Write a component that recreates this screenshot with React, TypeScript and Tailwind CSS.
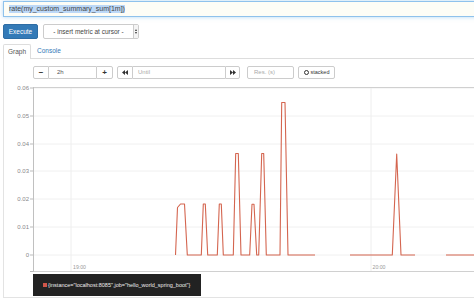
import React from 'react'

const font = { fontFamily: '"Liberation Sans", Arial, sans-serif' }

const yTicks = [
  { y: 88, label: '0.06' },
  { y: 116, label: '0.05' },
  { y: 144, label: '0.04' },
  { y: 171, label: '0.03' },
  { y: 199, label: '0.02' },
  { y: 227, label: '0.01' },
  { y: 255, label: '0' },
]

const series = [
  'M175.5,255 L177.5,207.5 L180.5,204 L184.5,204 L187.3,255 L201.3,255 L203.3,204 L205.3,204 L207.7,255 L217.3,255 L219.3,204 L221.3,204 L223.3,255 L233.3,255 L235.7,153.5 L238.3,153.5 L241,255 L249.7,255 L252,204.3 L254,204.3 L256.7,255 L258.7,255 L261.7,153.5 L263.7,153.5 L266.3,255 L280,255 L281.7,102.5 L285,102.5 L288,255 L315,255',
  'M350,255 L392.3,255 L396.7,154 L401,255 L415,255',
  'M446,255 L480,255',
]

function Backward(): React.JSX.Element {
  return (
    <svg width="6" height="5" viewBox="0 0 6 5">
      <path d="M3 0 L0 2.5 L3 5 Z M6 0 L3 2.5 L6 5 Z" fill="#333" />
    </svg>
  )
}

function Forward(): React.JSX.Element {
  return (
    <svg width="6" height="5" viewBox="0 0 6 5">
      <path d="M0 0 L3 2.5 L0 5 Z M3 0 L6 2.5 L3 5 Z" fill="#333" />
    </svg>
  )
}

function Chart(): React.JSX.Element {
  return (
    <svg width="470" height="195" viewBox="4 79 470 195" className="block" style={font}>
      {yTicks.map((t) => (
        <g key={t.label}>
          <line x1="33" x2="474" y1={t.y} y2={t.y} stroke="#f0f0f0" strokeWidth="1" />
          <line x1="30" x2="33" y1={t.y} y2={t.y} stroke="#aaa" strokeWidth="0.8" />
          <text x="29" y={t.y + 2} fontSize="6" fill="#888" textAnchor="end">
            {t.label}
          </text>
        </g>
      ))}
      <line x1="71" x2="71" y1="87" y2="271" stroke="#eeeeee" strokeWidth="1" />
      <line x1="371" x2="371" y1="87" y2="271" stroke="#eeeeee" strokeWidth="1" />
      <text x="73" y="269" fontSize="5.2" fill="#999">19:00</text>
      <text x="372.5" y="269" fontSize="5.2" fill="#999">20:00</text>
      <line x1="33" x2="474" y1="87.5" y2="87.5" stroke="#d0d0d0" strokeWidth="1" />
      <line x1="33" x2="474" y1="271.5" y2="271.5" stroke="#d0d0d0" strokeWidth="1" />
      <line x1="33.5" x2="33.5" y1="87" y2="272" stroke="#c0c0c0" strokeWidth="1" />
      <line x1="30" x2="33" y1="271.5" y2="271.5" stroke="#aaa" strokeWidth="0.8" />
      {series.map((d, i) => (
        <path key={i} d={d} fill="none" stroke="#d4654f" strokeWidth="1.1" strokeLinejoin="round" />
      ))}
    </svg>
  )
}

export default function App(): React.JSX.Element {
  return (
    <div className="w-[474px] h-[300px] overflow-hidden bg-white text-[#333]" style={font}>
      <div className="w-[520px] pl-[3px] pt-px">
        <div className="h-[16px] border border-[#8fc2ec] bg-[#fdfdf6] shadow-[0_0_4px_rgba(102,175,233,0.5)] flex items-center pl-[5px]">
          <span className="bg-[#bcd8f7] text-[7px] leading-[8px] text-[#444]">rate(my_custom_summary_sum[1m])</span>
        </div>

        <div className="mt-[7px] flex gap-[5px]">
          <button className="w-[35px] h-[15px] bg-[#337ab7] border border-[#2e6da4] rounded-[2px] text-white text-[6.5px] flex items-center justify-center">
            Execute
          </button>
          <div className="w-[96px] h-[15px] border border-[#ccc] rounded-[2px] bg-white flex items-center">
            <span className="flex-1 text-center text-[6.5px] text-[#444]">- insert metric at cursor -</span>
            <div className="w-[5px] h-[13px] border-l border-[#ccc] flex flex-col items-center justify-center gap-px bg-[#f4f4f4]">
              <div className="w-0 h-0 border-x-[1.5px] border-x-transparent border-b-[2px] border-b-[#333]" />
              <div className="w-0 h-0 border-x-[1.5px] border-x-transparent border-t-[2px] border-t-[#333]" />
            </div>
          </div>
        </div>

        <div className="mt-[5px] flex items-end h-[15px]">
          <div className="w-[28px] h-[15px] border border-b-0 border-[#ddd] rounded-t-[2px] bg-white flex items-center justify-center text-[6.5px] text-[#555]">
            Graph
          </div>
          <div className="flex-1 h-[15px] border-b border-[#ddd] flex items-center pl-[6px] text-[6.5px] text-[#337ab7]">
            Console
          </div>
        </div>

        <div className="border-l border-b border-[#e3e3e3] pt-[7px] pb-px">
          <div className="ml-[29px] flex h-[13px] text-[6px]">
            <div className="flex">
              <button className="w-[16px] h-[13px] border border-[#ccc] rounded-l-[2px] bg-white flex items-center justify-center font-bold text-[8px] leading-none">
                −
              </button>
              <div className="w-[47px] h-[13px] border-y border-[#ccc] bg-white flex items-center pl-[8px] text-[#555]">2h</div>
              <button className="w-[17px] h-[13px] border border-[#ccc] rounded-r-[2px] bg-white flex items-center justify-center font-bold text-[8px] leading-none">
                +
              </button>
            </div>
            <div className="flex ml-[4px]">
              <button className="w-[16px] h-[13px] border border-[#ccc] rounded-l-[2px] bg-white flex items-center justify-center">
                <Backward />
              </button>
              <div className="w-[92px] h-[13px] border-y border-[#ccc] bg-white flex items-center pl-[5px] text-[#aaa]">Until</div>
              <button className="w-[15px] h-[13px] border border-[#ccc] rounded-r-[2px] bg-white flex items-center justify-center">
                <Forward />
              </button>
            </div>
            <div className="ml-[7px] w-[47px] h-[13px] border border-[#ccc] rounded-[2px] bg-white flex items-center pl-[6px] text-[#aaa]">
              Res. (s)
            </div>
            <button className="ml-[4px] w-[37px] h-[13px] border border-[#ccc] rounded-[2px] bg-white flex items-center justify-center gap-[2px] text-[5.5px] text-[#333]">
              <span className="w-[5px] h-[5px] rounded-full border border-[#333]" />
              stacked
            </button>
          </div>

          <Chart />

          <div className="ml-[29px] w-[168px] h-[22px] bg-[#222] flex items-center pl-[10px] gap-[1px]">
            <span className="w-[4px] h-[4px] bg-[#d0564a]" />
            <span className="text-[5.5px] text-[#eee] whitespace-nowrap">
              {'{instance="localhost:8085",job="hello_world_spring_boot"}'}
            </span>
          </div>
        </div>
      </div>
    </div>
  )
}
